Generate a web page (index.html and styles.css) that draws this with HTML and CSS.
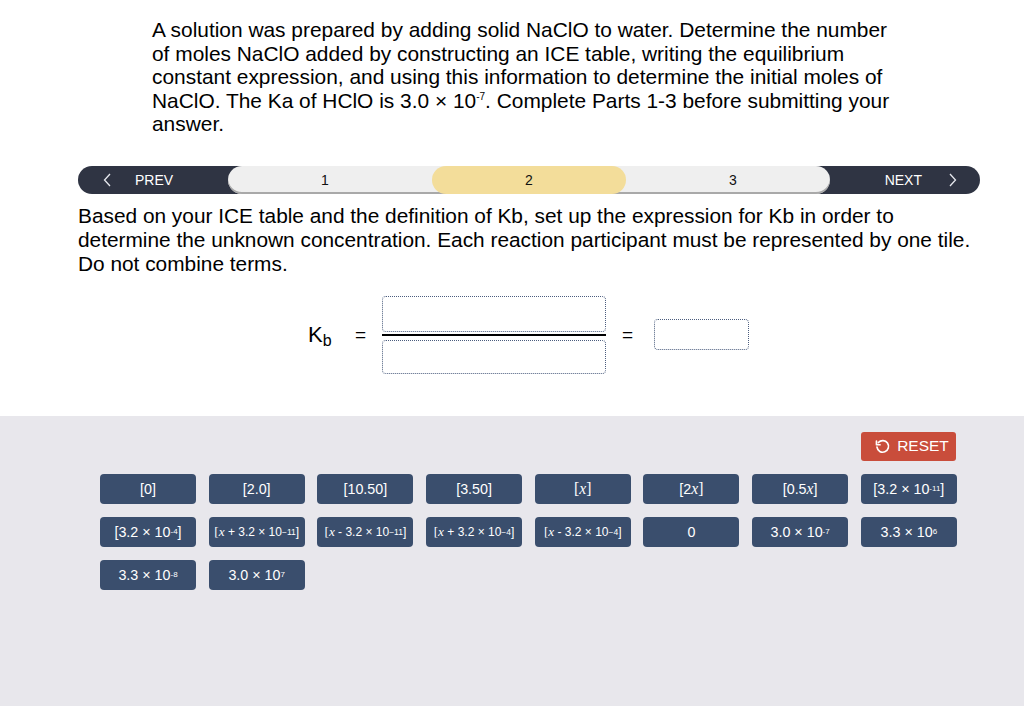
FILE: index.html
```html
<!DOCTYPE html>
<html>
<head>
<meta charset="utf-8">
<link rel="stylesheet" href="styles.css">
</head>
<body>
<div class="page">
  <p class="question">A solution was prepared by adding solid NaClO to water. Determine the number<br>of moles NaClO added by constructing an ICE table, writing the equilibrium<br>constant expression, and using this information to determine the initial moles of<br>NaClO. The Ka of HClO is 3.0 × 10<sup>-7</sup>. Complete Parts 1-3 before submitting your<br>answer.</p>

  <nav class="steps">
    <div class="side prev">
      <svg class="chev" width="8" height="14" viewBox="0 0 8 14" fill="none" stroke="#e6e8ee" stroke-width="1.3"><path d="M7 1L1.5 7L7 13"/></svg>
      <span>PREV</span>
    </div>
    <div class="track">
      <div class="seg first">1</div>
      <div class="seg active">2</div>
      <div class="seg last">3</div>
    </div>
    <div class="side next">
      <span>NEXT</span>
      <svg class="chev" width="8" height="14" viewBox="0 0 8 14" fill="none" stroke="#e6e8ee" stroke-width="1.3"><path d="M1 1L6.5 7L1 13"/></svg>
    </div>
  </nav>

  <p class="instr">Based on your ICE table and the definition of Kb, set up the expression for Kb in order to<br>determine the unknown concentration. Each reaction participant must be represented by one tile.<br>Do not combine terms.</p>

  <div class="equation">
    <span class="kb">K<sub>b</sub></span>
    <span class="eq">=</span>
    <div class="fraction">
      <div class="slot num"></div>
      <div class="bar"></div>
      <div class="slot den"></div>
    </div>
    <span class="eq eq2">=</span>
    <div class="slot answer"></div>
  </div>
</div>

<section class="tray">
  <div class="tray-head">
    <button class="reset">
      <svg width="17" height="17" viewBox="0 0 24 24" fill="none" stroke="#fff" stroke-width="2.4" stroke-linecap="round" stroke-linejoin="round"><path d="M6.2 6.4A8.2 8.2 0 1 1 4.2 13"/><path d="M3.5 4.5v5h5"/></svg>
      <span>RESET</span>
    </button>
  </div>
  <div class="tiles">
    <div class="tile">[0]</div>
    <div class="tile">[2.0]</div>
    <div class="tile">[10.50]</div>
    <div class="tile">[3.50]</div>
    <div class="tile"><span class="br">[</span><i>x</i><span class="br">]</span></div>
    <div class="tile">[2<i>x</i><span class="br">]</span></div>
    <div class="tile">[0.5<i>x</i>]</div>
    <div class="tile">[3.2 × 10<sup>-11</sup>]</div>

    <div class="tile">[3.2 × 10<sup>-4</sup>]</div>
    <div class="tile small"><span class="br">[</span><i>x</i>&nbsp;+ 3.2 × 10<sup>−11</sup>]</div>
    <div class="tile small"><span class="br">[</span><i>x</i>&nbsp;- 3.2 × 10<sup>−11</sup>]</div>
    <div class="tile small"><span class="br">[</span><i>x</i>&nbsp;+ 3.2 × 10<sup>−4</sup>]</div>
    <div class="tile small"><span class="br">[</span><i>x</i>&nbsp;- 3.2 × 10<sup>−4</sup>]</div>
    <div class="tile">0</div>
    <div class="tile">3.0 × 10<sup>-7</sup></div>
    <div class="tile">3.3 × 10<sup>6</sup></div>

    <div class="tile">3.3 × 10<sup>-8</sup></div>
    <div class="tile">3.0 × 10<sup>7</sup></div>
  </div>
</section>
</body>
</html>
```

FILE: styles.css
```css
html, body {
  margin: 0;
  padding: 0;
  background: #ffffff;
  font-family: "Liberation Sans", Arial, Helvetica, sans-serif;
  color: #000;
}

.page {
  padding-top: 18px;
}

.question {
  margin: 0 0 0 152px;
  font-size: 20.9px;
  line-height: 23.6px;
}

.question sup {
  font-size: 10px;
  vertical-align: 8px;
  line-height: 0;
}

.steps {
  margin: 30px 0 0 78px;
  width: 902px;
  height: 28px;
  display: flex;
  background: #2f3443;
  border-radius: 14px;
  font-size: 14px;
}

.side {
  width: 150px;
  display: flex;
  align-items: center;
  color: #ffffff;
  box-sizing: border-box;
}

.prev {
  padding-left: 25px;
  gap: 24px;
}

.next {
  justify-content: flex-end;
  padding-right: 23px;
  gap: 27px;
}

.track {
  flex: 1;
  display: flex;
  background: #efefef;
  border-radius: 14px;
  box-shadow: inset 0 -2px 0 #a9a9a9;
  overflow: hidden;
}

.seg {
  display: flex;
  align-items: center;
  justify-content: center;
  color: #111;
  width: 204px;
  box-sizing: border-box;
}

.seg.first {
  padding-right: 10px;
}

.seg.last {
  padding-left: 10px;
}

.seg.active {
  width: 194px;
  background: #f3dd9a;
  border-radius: 14px;
}

.instr {
  margin: 10px 0 0 78px;
  font-size: 20.85px;
  line-height: 24px;
}

.equation {
  margin: 20px 0 0 308px;
  display: flex;
  align-items: center;
}

.kb {
  font-size: 22px;
  width: 26px;
}

.kb sub {
  font-size: 16px;
  vertical-align: -4px;
  line-height: 0;
}

.eq {
  font-size: 19px;
  margin-left: 21px;
  width: 27px;
}

.eq2 {
  margin-left: 16px;
  width: 32px;
}

.fraction {
  width: 224px;
  display: flex;
  flex-direction: column;
}

.slot {
  border: 1px dotted #4b5d7e;
  border-radius: 4px;
  box-sizing: border-box;
  background: #ffffff;
}

.num {
  height: 36px;
}

.bar {
  height: 2px;
  background: #000;
  margin: 2px 0 4px;
}

.den {
  height: 34px;
}

.answer {
  width: 95px;
  height: 31px;
}

.tray {
  margin-top: 42px;
  background: #e8e7ec;
  height: 290px;
  padding: 16px 0 0 100px;
  box-sizing: border-box;
}

.tray-head {
  width: 856px;
  display: flex;
  justify-content: flex-end;
}

.reset {
  width: 95px;
  height: 29px;
  border: none;
  border-radius: 3px;
  background: #c94d3b;
  color: #fff;
  font-family: "Liberation Sans", Arial, sans-serif;
  font-size: 15.5px;
  display: flex;
  align-items: center;
  justify-content: center;
  gap: 6px;
  padding: 0 0 0 6px;
}

.tiles {
  margin-top: 13px;
  width: 857px;
  display: grid;
  grid-template-columns: repeat(8, 96px);
  column-gap: 12.7px;
  row-gap: 13px;
}

.tile {
  height: 30px;
  background: #3a4e6d;
  border-radius: 4px;
  color: #ffffff;
  font-size: 14.3px;
  display: flex;
  align-items: center;
  justify-content: center;
  white-space: nowrap;
}

.tile.small {
  font-size: 12px;
}

.tile i {
  font-family: "Liberation Serif", "Times New Roman", serif;
  font-size: 1.1em;
}

.tile .br {
  font-family: "Liberation Serif", "Times New Roman", serif;
  font-size: 1.1em;
}

.tile sup {
  font-size: 8px;
  vertical-align: 6px;
  line-height: 0;
}

.tile.small sup {
  font-size: 8.5px;
  vertical-align: 4px;
}
```
